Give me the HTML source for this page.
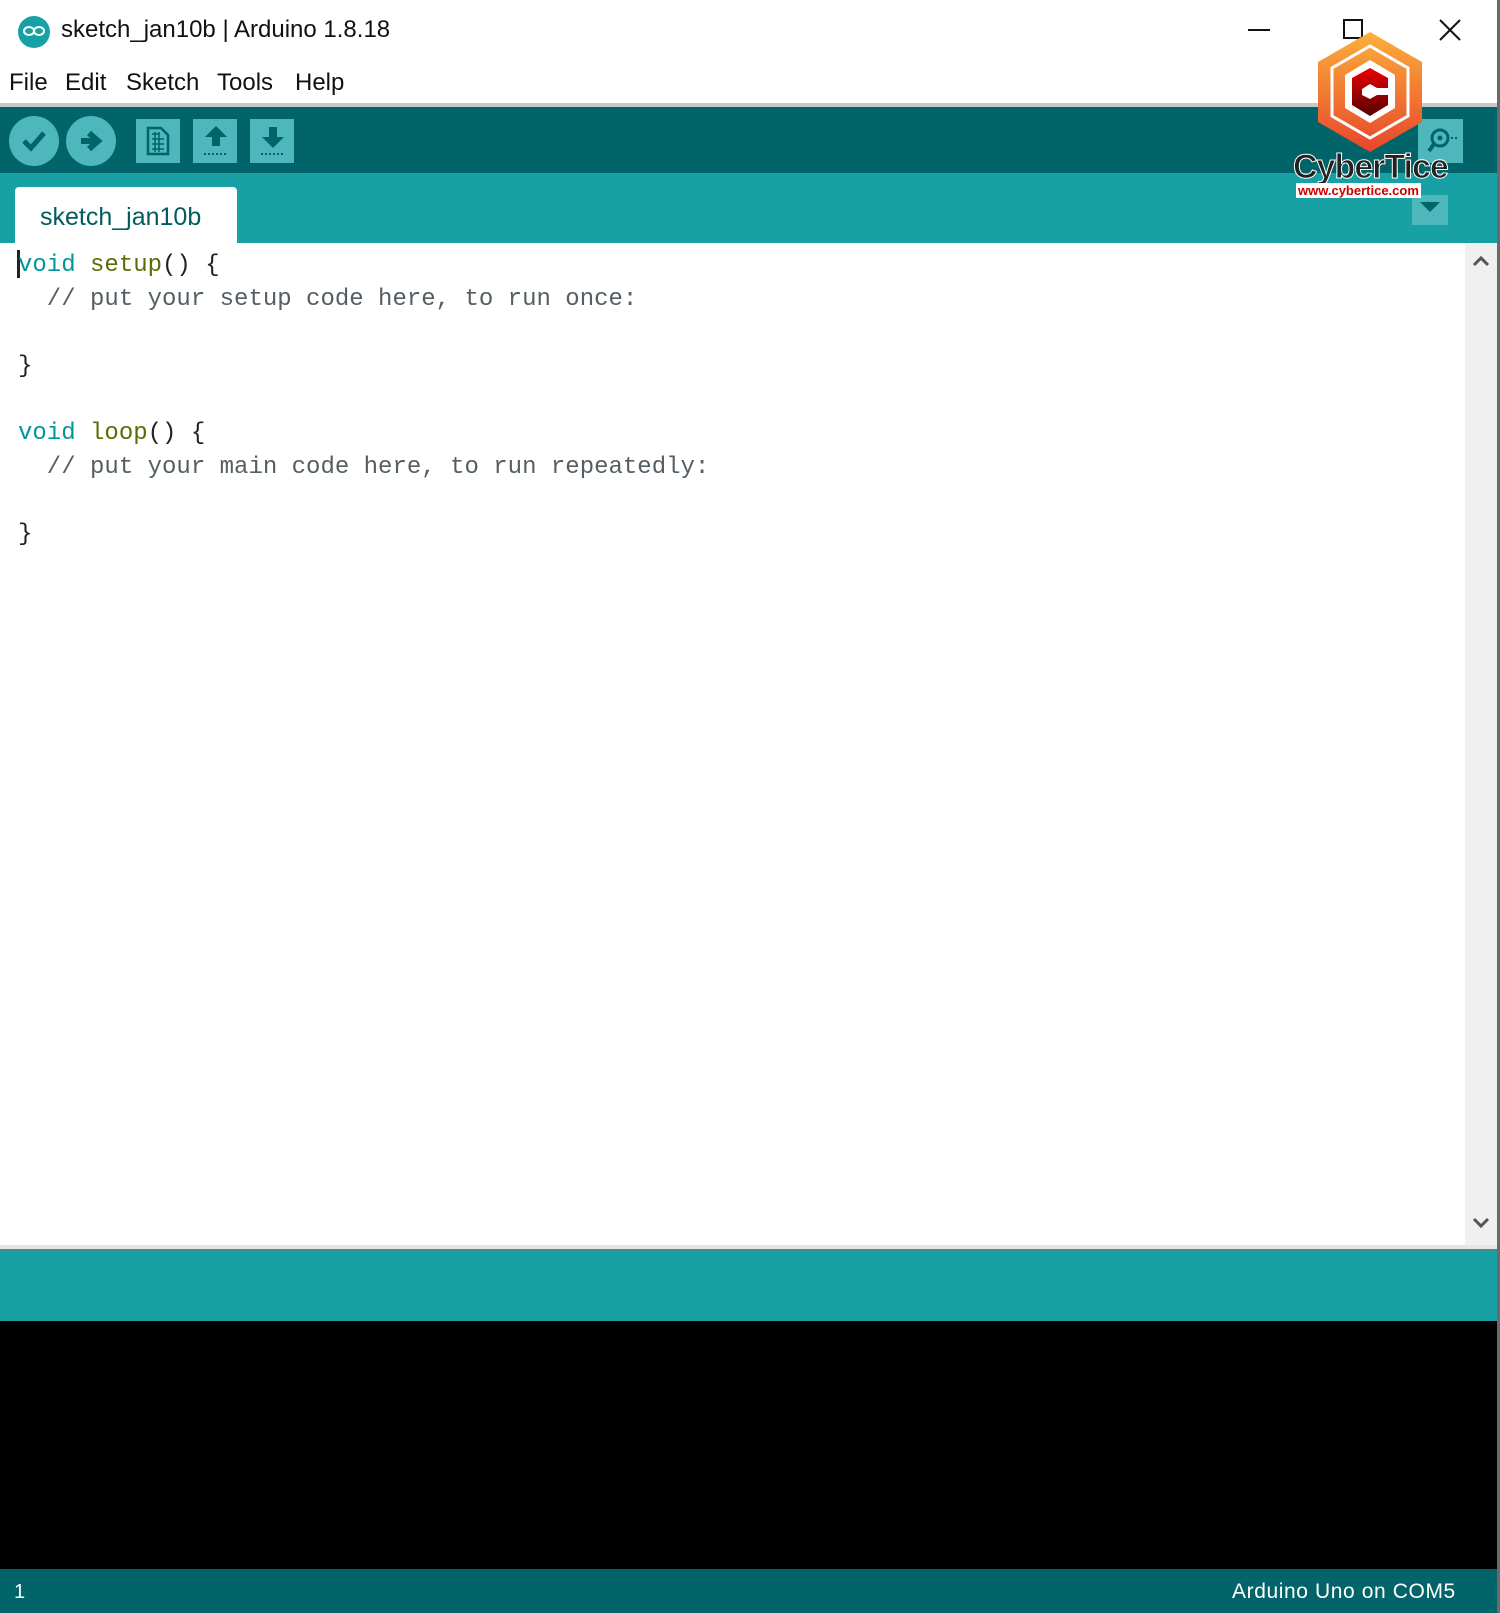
<!DOCTYPE html>
<html><head><meta charset="utf-8"><style>
*{margin:0;padding:0;box-sizing:border-box}
body{width:1500px;height:1613px;position:relative;background:#fff;overflow:hidden;font-family:"Liberation Sans",sans-serif}
.abs{position:absolute}
.code{font-family:"Liberation Mono",monospace;font-size:24px;white-space:pre;position:absolute;left:18px}
.kw{color:#00979c}.fn{color:#5e6d03}.cm{color:#555f63}.br{color:#222}
.btn{position:absolute;top:119px;width:44px;height:44px;background:#4db7bb}
.circ{border-radius:50%;width:50px;height:50px;top:116px}
.mi{position:absolute;top:69px;font-size:24px;color:#111}
</style></head><body>
<!-- title bar -->
<div class="abs" style="left:18px;top:16px;width:32px;height:32px;border-radius:50%;background:#17a1a5"></div>
<svg class="abs" style="left:22px;top:24px" width="24" height="14" viewBox="0 0 24 14"><ellipse cx="7" cy="7" rx="5" ry="4" fill="none" stroke="#fff" stroke-width="2"/><ellipse cx="17" cy="7" rx="5" ry="4" fill="none" stroke="#fff" stroke-width="2"/></svg>
<div class="abs" style="left:61px;top:16px;font-size:24px;color:#111">sketch_jan10b | Arduino 1.8.18</div>
<div class="abs" style="left:1248px;top:29px;width:22px;height:2px;background:#111"></div>
<div class="abs" style="left:1343px;top:19px;width:20px;height:20px;border:2px solid #111"></div>
<svg class="abs" style="left:1438px;top:18px" width="24" height="24"><path d="M2 2L22 22M22 2L2 22" stroke="#111" stroke-width="2"/></svg>
<!-- menu -->
<div class="mi" style="left:9px">File</div>
<div class="mi" style="left:65px">Edit</div>
<div class="mi" style="left:126px">Sketch</div>
<div class="mi" style="left:217px">Tools</div>
<div class="mi" style="left:295px">Help</div>
<div class="abs" style="left:0;top:103px;width:1500px;height:4px;background:#c8c8c8"></div>
<!-- toolbar -->
<div class="abs" style="left:0;top:107px;width:1497px;height:66px;background:#006468"></div>
<div class="btn circ" style="left:9px"></div>
<svg class="abs" style="left:20px;top:128px" width="28" height="26"><path d="M4 13L11 20L24 5" stroke="#006468" stroke-width="5" fill="none"/></svg>
<div class="btn circ" style="left:66px"></div>
<svg class="abs" style="left:78px;top:128px" width="28" height="26"><path d="M3 13H16M11 5L20 13L11 21" stroke="#006468" stroke-width="6" fill="none"/></svg>
<div class="btn" style="left:136px"></div>
<svg class="abs" style="left:146px;top:126px" width="26" height="30"><path d="M2 2H15L22 9V28H2Z" fill="none" stroke="#006468" stroke-width="2.5"/><path d="M6 8H13M6 13H18M6 18H18M6 23H18M9 6V26M13 6V26" stroke="#006468" stroke-width="1.5"/></svg>
<div class="btn" style="left:193px"></div>
<svg class="abs" style="left:201px;top:124px" width="30" height="34"><path d="M15 2L26 13H19V22H11V13H4Z" fill="#006468"/><path d="M3 30H27" stroke="#006468" stroke-width="2" stroke-dasharray="2 2"/></svg>
<div class="btn" style="left:250px"></div>
<svg class="abs" style="left:258px;top:124px" width="30" height="34"><path d="M15 24L26 13H19V3H11V13H4Z" fill="#006468"/><path d="M3 30H27" stroke="#006468" stroke-width="2" stroke-dasharray="2 2"/></svg>
<div class="btn" style="left:1418px;width:45px"></div>
<svg class="abs" style="left:1424px;top:126px" width="36" height="30"><circle cx="16" cy="12" r="8" fill="none" stroke="#006468" stroke-width="3"/><circle cx="16" cy="12" r="2.5" fill="#006468"/><path d="M10 18L5 25" stroke="#006468" stroke-width="4"/><path d="M27 12H34" stroke="#006468" stroke-width="2" stroke-dasharray="2 2"/></svg>
<!-- tab bar -->
<div class="abs" style="left:0;top:173px;width:1497px;height:70px;background:#17a1a5"></div>
<div class="abs" style="left:15px;top:187px;width:222px;height:56px;background:#fff;border-radius:4px 4px 0 0"></div>
<div class="abs" style="left:40px;top:203px;font-size:25px;color:#005c5f">sketch_jan10b</div>
<div class="abs" style="left:1412px;top:195px;width:36px;height:30px;background:#4db7bb"></div>
<svg class="abs" style="left:1420px;top:202px" width="20" height="12"><path d="M0 0H20L10 10Z" fill="#006468"/></svg>
<!-- editor -->
<div class="abs" style="left:17px;top:250px;width:3px;height:28px;background:#222"></div>
<div class="code" style="top:252px"><span class="kw">void</span> <span class="fn">setup</span><span class="br">() {</span></div>
<div class="code cm" style="top:286px">  // put your setup code here, to run once:</div>
<div class="code br" style="top:353px">}</div>
<div class="code" style="top:420px"><span class="kw">void</span> <span class="fn">loop</span><span class="br">() {</span></div>
<div class="code cm" style="top:454px">  // put your main code here, to run repeatedly:</div>
<div class="code br" style="top:521px">}</div>
<!-- scrollbar -->
<div class="abs" style="left:1465px;top:243px;width:32px;height:1003px;background:#f0f0f0"></div>
<svg class="abs" style="left:1472px;top:255px" width="18" height="12"><path d="M2 10L9 3L16 10" stroke="#555" stroke-width="3" fill="none"/></svg>
<svg class="abs" style="left:1472px;top:1217px" width="18" height="12"><path d="M2 2L9 9L16 2" stroke="#555" stroke-width="3" fill="none"/></svg>
<div class="abs" style="left:1497px;top:0;width:3px;height:1613px;background:#6a6a6a"></div>
<!-- bottom -->
<div class="abs" style="left:0;top:1245px;width:1497px;height:5px;background:#e6e6e6"></div>
<div class="abs" style="left:0;top:1249px;width:1497px;height:72px;background:#17a1a5;border-top:2px solid #3c8f92"></div>
<div class="abs" style="left:0;top:1321px;width:1497px;height:248px;background:#000"></div>
<div class="abs" style="left:0;top:1569px;width:1497px;height:44px;background:#006468"></div>
<div class="abs" style="left:14px;top:1581px;font-size:20px;color:#fff">1</div>
<div class="abs" style="left:1232px;top:1580px;font-size:21px;color:#fff;letter-spacing:0.6px">Arduino Uno on COM5</div>
<!-- watermark -->
<svg class="abs" style="left:1315px;top:30px" width="110" height="124" viewBox="0 0 110 124"><defs><linearGradient id="g" x1="0" y1="0" x2="0" y2="1"><stop offset="0" stop-color="#fbb03b"/><stop offset="1" stop-color="#e8452c"/></linearGradient><linearGradient id="r" x1="0" y1="0" x2="0" y2="1"><stop offset="0" stop-color="#e00"/><stop offset="1" stop-color="#500"/></linearGradient></defs><path d="M55 2L107 32V92L55 122L3 92V32Z" fill="url(#g)"/><path d="M55 16L93 38V86L55 108L17 86V38Z" fill="none" stroke="#fff" stroke-width="3"/><path d="M55 30L80 45V78L55 93L30 78V45Z" fill="#fff"/><path d="M55 38L73 48V58H62L55 54L47 59V65L55 69L62 65H73V75L55 86L37 75V48Z" fill="url(#r)"/></svg>
<div class="abs" style="left:1293px;top:148px;font-size:34px;font-weight:bold;color:#222;-webkit-text-stroke:1px #fff;letter-spacing:-1px">CyberTice</div>
<div class="abs" style="left:1296px;top:183px;font-size:13px;font-weight:bold;color:#c00;background:#fff;padding:0 2px">www.cybertice.com</div>
</body></html>
